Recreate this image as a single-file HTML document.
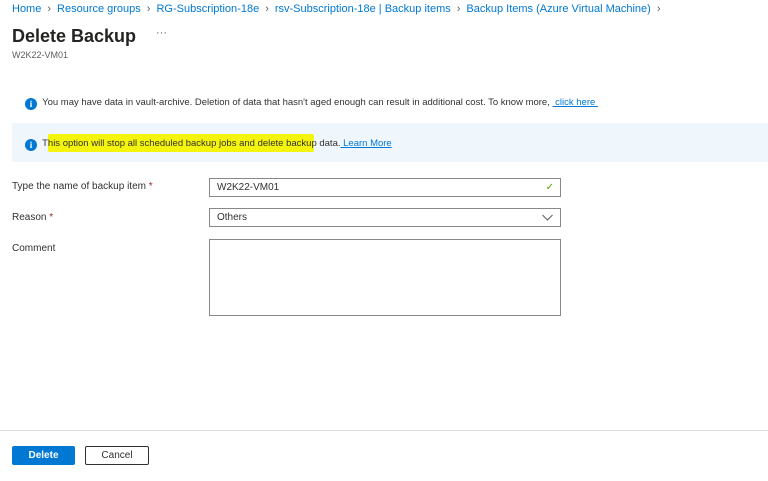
<!DOCTYPE html><html><head><style>
body{margin:0;width:768px;height:481px;background:#fff;font-family:"Liberation Sans",sans-serif;position:relative;overflow:hidden;color:#323130}
.a{position:absolute;white-space:nowrap}
.bc{top:3px;left:12px;font-size:11px;color:#0078d4}
.bc span{color:#605e5c;margin:0 6px}
.ic{display:inline-block;width:12px;height:12px;border-radius:50%;background:#0078d4;color:#fff;font-size:9px;font-weight:bold;text-align:center;line-height:12px;font-family:"Liberation Serif",serif;vertical-align:-2px}
.lbl{font-size:10px;color:#323130;left:12px}
.in{position:absolute;left:209px;width:352px;border:1px solid #8a8886;box-sizing:border-box;font-size:10px;padding-left:7px}
</style></head><body>
<div class="a bc">Home<span>›</span>Resource groups<span>›</span>RG-Subscription-18e<span>›</span>rsv-Subscription-18e | Backup items<span>›</span>Backup Items (Azure Virtual Machine)<span>›</span></div>
<div class="a" style="top:26px;left:12px;font-size:18px;font-weight:bold;color:#252423">Delete Backup</div>
<div class="a" style="top:27px;left:156px;font-size:11px;color:#605e5c">···</div>
<div class="a" style="top:50px;left:12px;font-size:9px;color:#605e5c">W2K22-VM01</div>
<div class="a" style="top:97px;left:25px;font-size:9.5px;color:#323130"><span class="ic">i</span>&nbsp; You may have data in vault-archive. Deletion of data that hasn't aged enough can result in additional cost. To know more, <span style="color:#0078d4;text-decoration:underline">&nbsp;click here&nbsp;</span></div>
<div class="a" style="top:123px;left:12px;width:756px;height:39px;background:#eff6fc"></div>
<div class="a" style="top:134px;left:48px;width:266px;height:18px;background:#f4f40c;border-radius:2px"></div>
<div class="a" style="top:138px;left:25px;font-size:9.5px;color:#323130"><span class="ic">i</span>&nbsp; This option will stop all scheduled backup jobs and delete backup data.<span style="color:#0078d4;text-decoration:underline"> Learn More </span></div>
<div class="a lbl" style="top:181px">Type the name of backup item <span style="color:#a4262c">*</span></div>
<div class="in" style="top:178px;height:19px;line-height:17px">W2K22-VM01<span style="position:absolute;right:6px;color:#57a300">✓</span></div>
<div class="a lbl" style="top:212px">Reason <span style="color:#a4262c">*</span></div>
<div class="in" style="top:208px;height:19px;line-height:17px">Others<svg style="position:absolute;right:7px;top:5px" width="11" height="7"><path d="M0.5 1L5.5 6L10.5 1" fill="none" stroke="#605e5c"/></svg></div>
<div class="a lbl" style="top:243px">Comment</div>
<div class="in" style="top:239px;height:77px"></div>
<div class="a" style="top:430px;left:0;width:768px;height:1px;background:#e1dfdd"></div>
<div class="a" style="top:446px;left:12px;width:63px;height:19px;background:#0078d4;border-radius:2px;color:#fff;font-size:10px;font-weight:bold;text-align:center;line-height:19px">Delete</div>
<div class="a" style="top:446px;left:85px;width:64px;height:19px;box-sizing:border-box;border:1px solid #323130;border-radius:2px;font-size:10px;text-align:center;line-height:17px">Cancel</div>
</body></html>
